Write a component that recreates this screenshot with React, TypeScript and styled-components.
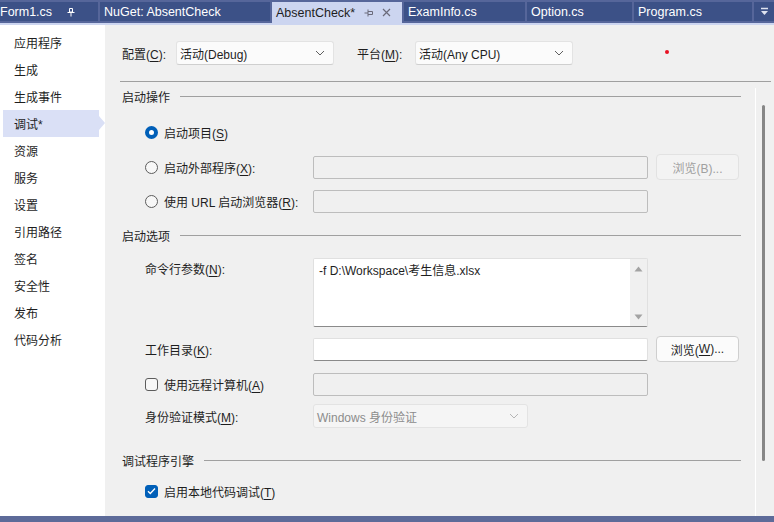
import React from "react";
import styled, { createGlobalStyle } from "styled-components";

const font = `"Liberation Sans", "Noto Sans CJK SC", sans-serif`;

const GlobalStyle = createGlobalStyle`
  html, body {
    margin: 0;
    padding: 0;
    background: #f0f0f0;
  }
  body {
    font-family: ${font};
    font-size: 12px;
    color: #1e1e1e;
  }
`;

const Frame = styled.div`
  width: 774px;
  height: 522px;
  display: flex;
  flex-direction: column;
  overflow: hidden;
  background: #f0f0f0;
`;

/* ---------- document tabs ---------- */

const TabBar = styled.div`
  height: 23px;
  display: flex;
  align-items: stretch;
  background: #56669a;
  padding-top: 2px;
  box-sizing: border-box;
`;

const Tab = styled.div<{ $w: number; $active?: boolean }>`
  width: ${(p) => p.$w}px;
  margin-right: 2px;
  display: flex;
  align-items: center;
  padding-left: 4px;
  box-sizing: border-box;
  font-size: 12.5px;
  white-space: nowrap;
  background: ${(p) => (p.$active ? "#ccd5f0" : "#3c5187")};
  color: ${(p) => (p.$active ? "#1e1e1e" : "#ffffff")};
  margin-bottom: ${(p) => (p.$active ? 0 : 2)}px;
`;

const FirstTab = styled(Tab)`
  padding-left: 0;
`;

const TabIcon = styled.span<{ $ml: number }>`
  display: inline-flex;
  margin-left: ${(p) => p.$ml}px;
`;

const Overflow = styled.div`
  flex: 1;
  display: flex;
  align-items: center;
  justify-content: center;
  background: #3c5187;
  margin-bottom: 2px;
`;

const TabUnderline = styled.div`
  height: 2px;
  background: #ccd5f0;
`;

/* ---------- body ---------- */

const Body = styled.div`
  flex: 1;
  display: flex;
  min-height: 0;
`;

const Sidebar = styled.div`
  width: 105px;
  background: #ffffff;
  padding-top: 4px;
  box-sizing: border-box;
  display: flex;
  flex-direction: column;
`;

const NavItem = styled.div<{ $active?: boolean }>`
  position: relative;
  height: 27px;
  width: 96px;
  margin-left: 3px;
  padding-left: 11px;
  box-sizing: border-box;
  display: flex;
  align-items: center;
  font-size: 12px;
  background: ${(p) => (p.$active ? "#dae0f6" : "transparent")};

  &::after {
    content: "";
    display: ${(p) => (p.$active ? "block" : "none")};
    position: absolute;
    right: -6px;
    top: 6px;
    border-top: 7px solid transparent;
    border-bottom: 7px solid transparent;
    border-left: 6px solid #dae0f6;
  }
`;

const Content = styled.div`
  flex: 1;
  display: flex;
  flex-direction: column;
  min-width: 0;
`;

const ConfigRow = styled.div`
  display: flex;
  align-items: center;
  height: 24px;
  margin-top: 16px;
  padding-left: 17px;
`;

const Label = styled.span<{ $w?: number; $ml?: number }>`
  display: inline-block;
  width: ${(p) => (p.$w ? `${p.$w}px` : "auto")};
  margin-left: ${(p) => p.$ml || 0}px;
  white-space: nowrap;
  font-size: 12px;
`;

const Key = styled.span`
  text-decoration: underline;
  text-underline-offset: 2px;
`;

const Combo = styled.div<{ $w: number; $disabled?: boolean }>`
  width: ${(p) => p.$w}px;
  height: 24px;
  box-sizing: border-box;
  display: flex;
  align-items: center;
  justify-content: space-between;
  padding: 0 8px 0 3px;
  border: 1px solid #e3e3e3;
  border-bottom-color: ${(p) => (p.$disabled ? "#e3e3e3" : "#cfcfcf")};
  border-radius: 3px;
  background: ${(p) => (p.$disabled ? "#f5f5f5" : "#fbfbfb")};
  color: ${(p) => (p.$disabled ? "#8c8c8c" : "#1e1e1e")};
  font-size: 12px;
  white-space: nowrap;
`;

const RedDot = styled.span`
  width: 4px;
  height: 4px;
  border-radius: 50%;
  background: #e81123;
  margin-left: 92px;
  margin-top: -2px;
`;

const Divider = styled.div`
  height: 1px;
  background: #a0a0a0;
  margin: 16px 3px 0 15px;
`;

const ScrollArea = styled.div`
  flex: 1;
  display: flex;
  margin-top: 6px;
  min-height: 0;
`;

const Panel = styled.div`
  width: 650px;
  display: flex;
  flex-direction: column;
`;

const ScrollTrack = styled.div`
  flex: 1;
  border-left: 1px solid #ffffff;
  display: flex;
  justify-content: flex-start;
`;

const Thumb = styled.div`
  width: 3px;
  height: 356px;
  margin: 17px 0 0 6px;
  border-radius: 2px;
  background: #868686;
`;

const SectionHeader = styled.div<{ $mt: number }>`
  display: flex;
  align-items: center;
  height: 16px;
  margin-top: ${(p) => p.$mt}px;
  padding-left: 17px;
  padding-right: 14px;
  font-size: 12px;

  &::after {
    content: "";
    flex: 1;
    height: 1px;
    margin-left: 10px;
    background: #a0a0a0;
  }
`;

const FormRow = styled.div<{ $mt: number; $h: number; $top?: boolean }>`
  display: grid;
  grid-template-columns: 160px 335px 83px;
  column-gap: 8px;
  align-items: ${(p) => (p.$top ? "start" : "center")};
  height: ${(p) => p.$h}px;
  margin-top: ${(p) => p.$mt}px;
  padding-left: 40px;
`;

const Choice = styled.label`
  display: flex;
  align-items: center;
  gap: 6px;
  white-space: nowrap;
  font-size: 12px;
`;

const TopLabel = styled.span`
  padding-top: 2px;
  white-space: nowrap;
`;

const Field = styled.div<{ $disabled?: boolean; $h?: number }>`
  height: ${(p) => p.$h || 23}px;
  box-sizing: border-box;
  border: 1px solid ${(p) => (p.$disabled ? "#bdbdbd" : "#e0e0e0")};
  border-bottom-color: ${(p) => (p.$disabled ? "#bdbdbd" : "#8a8a8a")};
  border-radius: 2px;
  background: ${(p) => (p.$disabled ? "#f0f0f0" : "#ffffff")};
`;

const TextArea = styled.div`
  height: 69px;
  box-sizing: border-box;
  border: 1px solid #e0e0e0;
  border-bottom-color: #8a8a8a;
  border-radius: 2px;
  background: #ffffff;
  display: flex;
`;

const TextValue = styled.div`
  flex: 1;
  padding: 2px 0 0 5px;
  font-size: 12px;
  white-space: nowrap;
`;

const MiniScroll = styled.div`
  width: 17px;
  background: #f0f0f0;
  display: flex;
  flex-direction: column;
  justify-content: space-between;
  align-items: center;
  padding: 7px 0 6px;
`;

const Button = styled.div<{ $disabled?: boolean }>`
  height: 26px;
  box-sizing: border-box;
  display: flex;
  align-items: center;
  justify-content: center;
  border: 1px solid ${(p) => (p.$disabled ? "#e2e2e2" : "#cfcfcf")};
  border-radius: 4px;
  background: ${(p) => (p.$disabled ? "#f3f3f3" : "#fbfbfb")};
  color: ${(p) => (p.$disabled ? "#a0a0a0" : "#1e1e1e")};
  font-size: 12px;
  white-space: nowrap;
`;

const Radio = styled.span<{ $on?: boolean }>`
  width: 13px;
  height: 13px;
  box-sizing: border-box;
  border-radius: 50%;
  flex-shrink: 0;
  border: ${(p) => (p.$on ? "4px solid #005fb8" : "1px solid #5c5c5c")};
  background: ${(p) => (p.$on ? "#ffffff" : "#f7f7f7")};
`;

const Box = styled.span<{ $on?: boolean }>`
  width: 13px;
  height: 13px;
  box-sizing: border-box;
  border-radius: 3px;
  flex-shrink: 0;
  display: flex;
  align-items: center;
  justify-content: center;
  border: 1px solid ${(p) => (p.$on ? "#005fb8" : "#5c5c5c")};
  background: ${(p) => (p.$on ? "#005fb8" : "#f7f7f7")};
`;

const StatusBar = styled.div`
  height: 6px;
  background: #5d6b99;
`;

/* ---------- icons ---------- */

const PinDown = () => (
  <svg width="10" height="10" viewBox="0 0 10 10">
    <path d="M3.5 1.5h3v3.5h-3z M1.5 5.5h7 M5 5.5v4" stroke="#fff" strokeWidth="1" fill="none" />
  </svg>
);

const PinSide = () => (
  <svg width="10" height="10" viewBox="0 0 10 10">
    <path d="M0.5 5h3.5 M4 1.5v7 M4 3.5h4.5v3h-4.5" stroke="#6a6a7a" strokeWidth="1" fill="none" />
  </svg>
);

const CloseX = () => (
  <svg width="9" height="9" viewBox="0 0 9 9">
    <path d="M1 1l7 7M8 1l-7 7" stroke="#6a6a7a" strokeWidth="1.2" />
  </svg>
);

const OverflowIcon = () => (
  <svg width="9" height="9" viewBox="0 0 9 9">
    <path d="M1 1.5h7" stroke="#dfe3f0" strokeWidth="1.5" />
    <path d="M1 4h7l-3.5 4z" fill="#dfe3f0" />
  </svg>
);

const Chevron = ({ color = "#5f5f5f" }: { color?: string }) => (
  <svg width="10" height="6" viewBox="0 0 10 6">
    <path d="M1 1l4 4 4-4" stroke={color} strokeWidth="1" fill="none" />
  </svg>
);

const Check = () => (
  <svg width="9" height="8" viewBox="0 0 9 8">
    <path d="M1 4.2l2.3 2.3L8 1.5" stroke="#fff" strokeWidth="1.3" fill="none" />
  </svg>
);

const Arrow = ({ up }: { up?: boolean }) => (
  <svg width="9" height="6" viewBox="0 0 9 6">
    <path d={up ? "M0.5 5.5h8L4.5 0.5z" : "M0.5 0.5h8L4.5 5.5z"} fill="#a3a3a3" />
  </svg>
);

const navItems = [
  "应用程序",
  "生成",
  "生成事件",
  "调试*",
  "资源",
  "服务",
  "设置",
  "引用路径",
  "签名",
  "安全性",
  "发布",
  "代码分析",
];

const App: React.FC = () => {
  return (
    <>
      <GlobalStyle />
      <Frame>
        <TabBar>
          <FirstTab $w={98}>
            Form1.cs
            <TabIcon $ml={14}>
              <PinDown />
            </TabIcon>
          </FirstTab>
          <Tab $w={170}>NuGet: AbsentCheck</Tab>
          <Tab $w={130} $active>
            AbsentCheck*
            <TabIcon $ml={9}>
              <PinSide />
            </TabIcon>
            <TabIcon $ml={8}>
              <CloseX />
            </TabIcon>
          </Tab>
          <Tab $w={121}>ExamInfo.cs</Tab>
          <Tab $w={105}>Option.cs</Tab>
          <Tab $w={118}>Program.cs</Tab>
          <Overflow>
            <OverflowIcon />
          </Overflow>
        </TabBar>
        <TabUnderline />
        <Body>
          <Sidebar>
            {navItems.map((item, i) => (
              <NavItem key={item} $active={i === 3}>
                {item}
              </NavItem>
            ))}
          </Sidebar>
          <Content>
            <ConfigRow>
              <Label $w={54}>
                配置(<Key>C</Key>):
              </Label>
              <Combo $w={158}>
                活动(Debug)
                <Chevron />
              </Combo>
              <Label $w={58} $ml={23}>
                平台(<Key>M</Key>):
              </Label>
              <Combo $w={158}>
                活动(Any CPU)
                <Chevron />
              </Combo>
              <RedDot />
            </ConfigRow>
            <Divider />
            <ScrollArea>
              <Panel>
                <SectionHeader $mt={0}>启动操作</SectionHeader>

                <FormRow $mt={16} $h={24}>
                  <Choice>
                    <Radio $on />
                    <span>
                      启动项目(<Key>S</Key>)
                    </span>
                  </Choice>
                </FormRow>

                <FormRow $mt={10} $h={24}>
                  <Choice>
                    <Radio />
                    <span>
                      启动外部程序(<Key>X</Key>):
                    </span>
                  </Choice>
                  <Field $disabled />
                  <Button $disabled>浏览(B)...</Button>
                </FormRow>

                <FormRow $mt={11} $h={24}>
                  <Choice>
                    <Radio />
                    <span>
                      使用 URL 启动浏览器(<Key>R</Key>):
                    </span>
                  </Choice>
                  <Field $disabled />
                </FormRow>

                <SectionHeader $mt={14}>启动选项</SectionHeader>

                <FormRow $mt={15} $h={69} $top>
                  <TopLabel>
                    命令行参数(<Key>N</Key>):
                  </TopLabel>
                  <TextArea>
                    <TextValue>-f D:\Workspace\考生信息.xlsx</TextValue>
                    <MiniScroll>
                      <Arrow up />
                      <Arrow />
                    </MiniScroll>
                  </TextArea>
                </FormRow>

                <FormRow $mt={9} $h={26}>
                  <span>
                    工作目录(<Key>K</Key>):
                  </span>
                  <Field />
                  <Button>
                    浏览(<Key>W</Key>)...
                  </Button>
                </FormRow>

                <FormRow $mt={10} $h={24}>
                  <Choice>
                    <Box />
                    <span>
                      使用远程计算机(<Key>A</Key>)
                    </span>
                  </Choice>
                  <Field $disabled />
                </FormRow>

                <FormRow $mt={8} $h={24}>
                  <span>
                    身份验证模式(<Key>M</Key>):
                  </span>
                  <Combo $w={215} $disabled>
                    Windows 身份验证
                    <Chevron color="#b5b5b5" />
                  </Combo>
                </FormRow>

                <SectionHeader $mt={24}>调试程序引擎</SectionHeader>

                <FormRow $mt={11} $h={24}>
                  <Choice>
                    <Box $on>
                      <Check />
                    </Box>
                    <span>
                      启用本地代码调试(<Key>T</Key>)
                    </span>
                  </Choice>
                </FormRow>
              </Panel>
              <ScrollTrack>
                <Thumb />
              </ScrollTrack>
            </ScrollArea>
          </Content>
        </Body>
        <StatusBar />
      </Frame>
    </>
  );
};

export default App;
